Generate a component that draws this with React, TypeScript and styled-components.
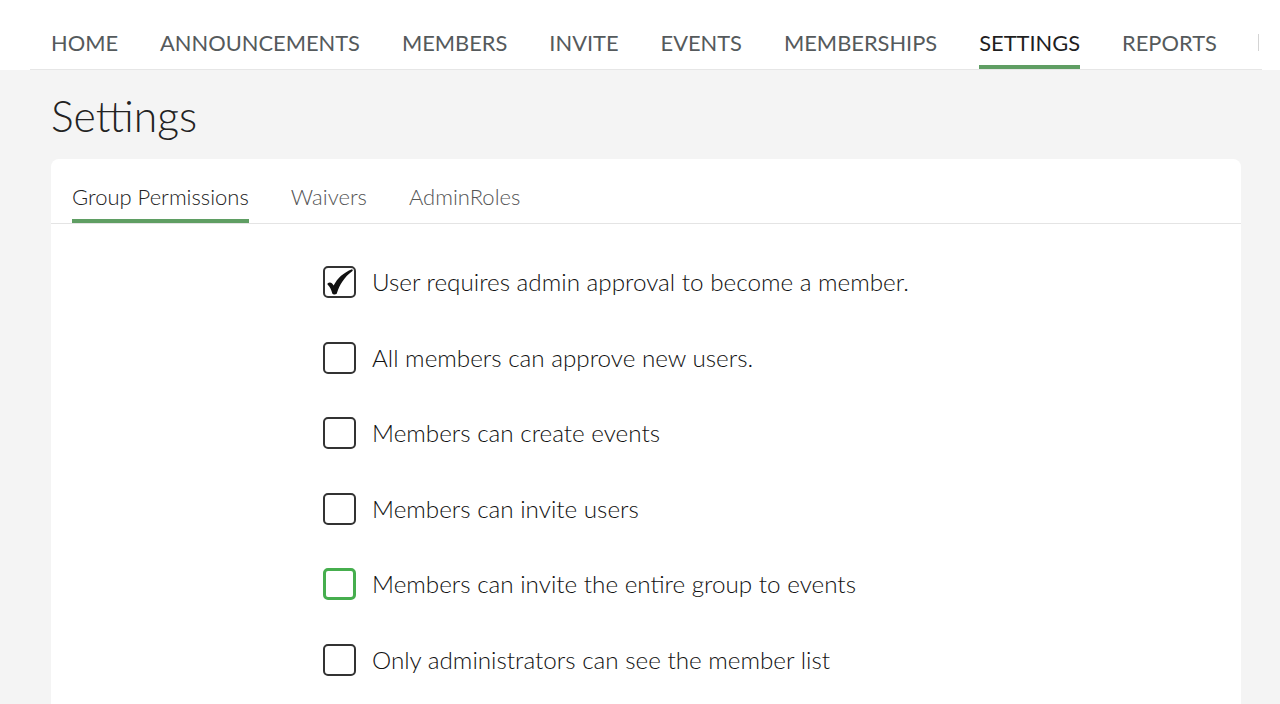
import React, { useState } from 'react';
import styled, { createGlobalStyle } from 'styled-components';

const GlobalStyle = createGlobalStyle`
  html, body {
    margin: 0;
    padding: 0;
    background: #f4f4f4;
    font-family: Lato, 'Open Sans', sans-serif;
    overflow: hidden;
  }
`;

const Page = styled.div`
  width: 1280px;
  height: 704px;
  background: #f4f4f4;
  overflow: hidden;
`;

const TopBar = styled.header`
  background: #ffffff;
  padding: 0 18px 0 30px;
`;

const Nav = styled.nav`
  display: flex;
  align-items: stretch;
  height: 69px;
  border-bottom: 1px solid #e6e6e6;
`;

const NavItem = styled.a<{ $active?: boolean }>`
  position: relative;
  display: flex;
  align-items: center;
  padding: 16px 21px 0;
  font-size: 21.85px;
  color: ${(p) => (p.$active ? '#1f1f1f' : '#555a5c')};
  text-decoration: none;
  white-space: nowrap;

  &::after {
    content: '';
    position: absolute;
    left: 21px;
    right: 21px;
    bottom: 0;
    height: 4px;
    background: ${(p) => (p.$active ? '#5f9e63' : 'transparent')};
  }
`;

const NavDivider = styled.span`
  flex: none;
  align-self: center;
  margin: 16px 0 0 20px;
  width: 1px;
  height: 17px;
  background: #d4d4d4;
`;

const Main = styled.main`
  padding: 0 39px 0 51px;
`;

const Heading = styled.h1`
  margin: 0;
  padding: 22px 0 19px;
  font-size: 42.7px;
  font-weight: 300;
  line-height: 48px;
  color: #222;
`;

const Card = styled.section`
  background: #ffffff;
  border-radius: 8px 8px 0 0;
  min-height: 560px;
`;

const Tabs = styled.div`
  display: flex;
  gap: 42px;
  padding: 0 21px;
  height: 64px;
  border-bottom: 1px solid #e4e4e4;
`;

const Tab = styled.button<{ $active?: boolean }>`
  position: relative;
  display: flex;
  align-items: center;
  padding: 10px 0 0;
  border: none;
  background: none;
  font-family: inherit;
  font-size: 22px;
  font-weight: 300;
  color: ${(p) => (p.$active ? '#222' : '#555')};
  cursor: pointer;

  &::after {
    content: '';
    position: absolute;
    left: 0;
    right: 0;
    bottom: 0;
    height: 4px;
    background: ${(p) => (p.$active ? '#5f9e63' : 'transparent')};
  }
`;

const OptionList = styled.ul`
  list-style: none;
  margin: 0;
  padding: 42px 0 0 272px;
  display: flex;
  flex-direction: column;
  gap: 43.5px;
`;

const Option = styled.li`
  display: flex;
  align-items: center;
  gap: 16px;
  cursor: pointer;
`;

const Box = styled.span<{ $focused?: boolean }>`
  box-sizing: border-box;
  width: 33px;
  height: 32px;
  flex: none;
  border: ${(p) => (p.$focused ? '3px solid #46ae4e' : '2px solid #333')};
  border-radius: 5px;
  display: flex;
  align-items: center;
  justify-content: center;
`;

const Label = styled.span`
  font-size: 24.25px;
  font-weight: 300;
  color: #111;
  line-height: 32px;
`;

const CheckMark: React.FC = () => (
  <svg width="28" height="28" viewBox="0 0 28 28">
    <path
      d="M1.5 15.5 C3.5 13.8 6 14.2 7.6 17.6 C11.5 10 17.5 4.5 26 1.2 C27 1.6 27 2.6 26.2 3.2 C18.5 8.8 13.5 16.5 10.8 25.6 C10 26.8 7.2 26.8 6.4 25.7 C5.2 21.6 3.8 18.6 1.5 16.6 Z"
      fill="#111"
    />
  </svg>
);

const navLinks = [
  'HOME',
  'ANNOUNCEMENTS',
  'MEMBERS',
  'INVITE',
  'EVENTS',
  'MEMBERSHIPS',
  'SETTINGS',
  'REPORTS',
];

const tabs = ['Group Permissions', 'Waivers', 'AdminRoles'];

const permissions = [
  'User requires admin approval to become a member.',
  'All members can approve new users.',
  'Members can create events',
  'Members can invite users',
  'Members can invite the entire group to events',
  'Only administrators can see the member list',
];

const App: React.FC = () => {
  const [checked, setChecked] = useState<boolean[]>([true, false, false, false, false, false]);
  const focused = 4;

  const toggle = (i: number) => {
    setChecked(checked.map((c, idx) => (idx === i ? !c : c)));
  };

  return (
    <Page>
      <GlobalStyle />
      <TopBar>
        <Nav>
          {navLinks.map((link) => (
            <NavItem key={link} $active={link === 'SETTINGS'}>
              {link}
            </NavItem>
          ))}
          <NavDivider />
        </Nav>
      </TopBar>
      <Main>
        <Heading>Settings</Heading>
        <Card>
          <Tabs>
            {tabs.map((t, i) => (
              <Tab key={t} $active={i === 0}>
                {t}
              </Tab>
            ))}
          </Tabs>
          <OptionList>
            {permissions.map((p, i) => (
              <Option key={p} onClick={() => toggle(i)}>
                <Box $focused={i === focused}>{checked[i] && <CheckMark />}</Box>
                <Label>{p}</Label>
              </Option>
            ))}
          </OptionList>
        </Card>
      </Main>
    </Page>
  );
};

export default App;
